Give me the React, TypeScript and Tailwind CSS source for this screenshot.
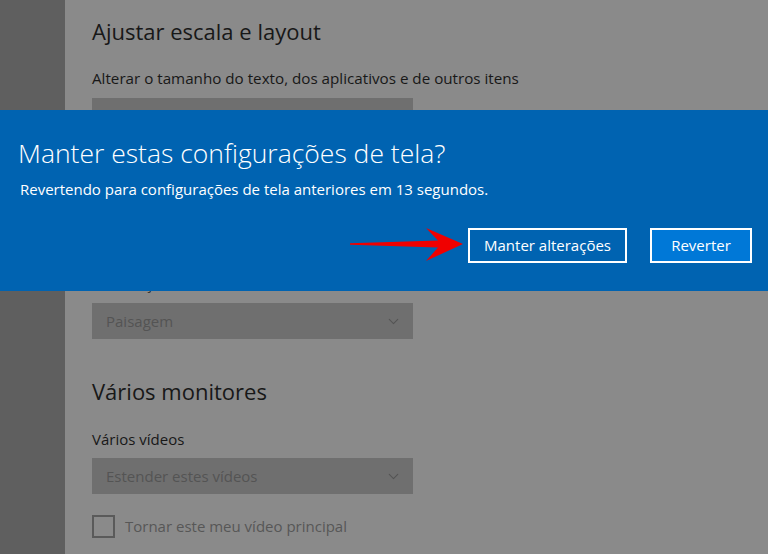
import { ChevronDown } from 'lucide-react';

function Select({ value }: { value: string }) {
  return (
    <div className="flex items-center justify-between w-[321px] h-[36px] bg-[#6f6f6f] pl-[14px] pr-[11px] text-[15px] text-[#545454]">
      <span>{value}</span>
      <ChevronDown className="w-[17px] h-[17px] text-[#545454]" strokeWidth={1.5} />
    </div>
  );
}

function RedArrow() {
  return (
    <svg
      className="absolute left-[350px] top-[226px]"
      width="115"
      height="38"
      viewBox="0 0 115 38"
    >
      <polygon points="0,17.2 88,14.5 76,2 113,18 76,35 88,21.5 0,18.8" fill="#f00000" />
    </svg>
  );
}

export default function App() {
  return (
    <div
      className="relative flex w-[768px] h-[554px] overflow-hidden"
      style={{ fontFamily: '"Open Sans", "Noto Sans", sans-serif' }}
    >
      <div className="w-[65px] shrink-0 bg-[#5f5f5f]" />

      <div className="flex-1 bg-[#8a8a8a] pl-[27px] text-[#181818]">
        <h2 className="mt-[15px] text-[22px] leading-[32px]">Ajustar escala e layout</h2>
        <p className="mt-[20px] text-[15.2px] leading-[22px]">
          Alterar o tamanho do texto, dos aplicativos e de outros itens
        </p>
        <div className="mt-[9px]">
          <Select value="100% (Recomendável)" />
        </div>
        <p className="mt-[14px] text-[15px] leading-[22px] text-[#0a3d66]">
          Configurações de escala avançadas
        </p>
        <p className="mt-[20px] text-[15px] leading-[22px]">Resolução</p>
        <div className="mt-[9px]">
          <Select value="1366 × 768 (Recomendável)" />
        </div>
        <p className="mt-[15px] text-[15px] leading-[22px]">Orientação</p>
        <div className="mt-[9px]">
          <Select value="Paisagem" />
        </div>

        <h2 className="mt-[36px] text-[22px] leading-[32px]">Vários monitores</h2>
        <p className="mt-[21px] text-[15px] leading-[22px]">Vários vídeos</p>
        <div className="mt-[8px]">
          <Select value="Estender estes vídeos" />
        </div>
        <div className="mt-[21px] flex items-center gap-[10px] text-[15px] text-[#575757]">
          <div className="w-[23px] h-[23px] border-2 border-[#5a5a5a]" />
          <span>Tornar este meu vídeo principal</span>
        </div>
      </div>

      <div className="absolute left-0 right-0 top-[110px] h-[181px] bg-[#0063b1] text-white">
        <div className="pl-[18px] pt-[24px]">
          <p className="text-[26.5px] leading-[38px] font-light">
            Manter estas configurações de tela?
          </p>
          <p className="mt-[6px] pl-[2px] text-[15px] leading-[22px]">
            Revertendo para configurações de tela anteriores em 13 segundos.
          </p>
        </div>
        <div className="flex justify-end gap-[23px] pr-[16px] mt-[28px]">
          <button
            type="button"
            className="w-[159px] h-[35px] border-2 border-white bg-[#0063b1] text-[15px] text-white"
          >
            Manter alterações
          </button>
          <button
            type="button"
            className="w-[102px] h-[35px] border-2 border-white bg-[#0078d7] text-[15px] text-white"
          >
            Reverter
          </button>
        </div>
      </div>

      <RedArrow />
    </div>
  );
}
